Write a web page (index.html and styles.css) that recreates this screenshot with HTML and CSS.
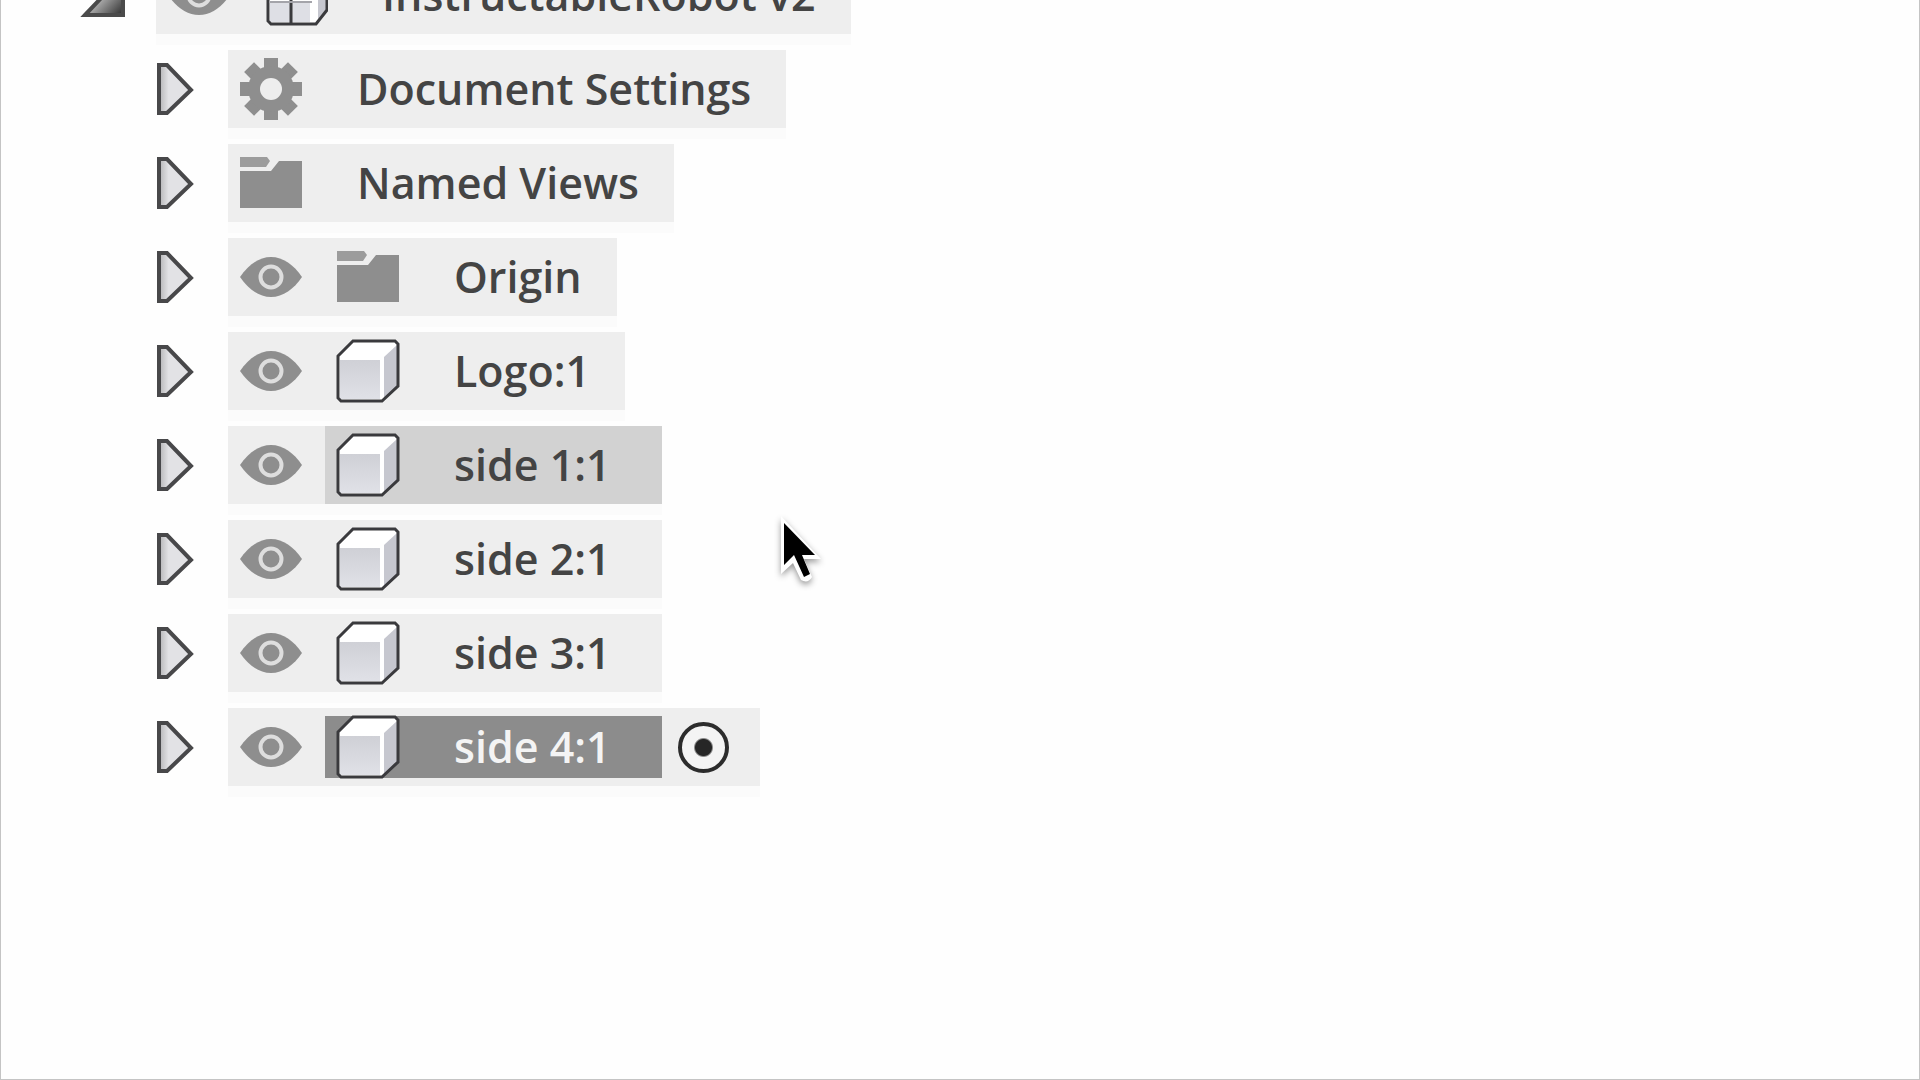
FILE: index.html
```html
<!DOCTYPE html>
<html lang="en">
<head>
  <meta charset="UTF-8">
  <meta name="viewport" content="width=device-width, initial-scale=1.0">
  <title>InstructableRobot v2 - Browser</title>
  <link rel="stylesheet" href="styles.css">
</head>
<body>

  <!-- Shared icons -->
  <svg class="icon-defs" aria-hidden="true">
    <defs>
      <linearGradient id="faceFill" x1="0" y1="0" x2="0" y2="1">
        <stop offset="0" stop-color="#cfd0d6"/>
        <stop offset="1" stop-color="#e0e1e7"/>
      </linearGradient>
      <linearGradient id="openFill" x1="0" y1="0" x2="1" y2="1">
        <stop offset="0.4" stop-color="#c8c8c8"/>
        <stop offset="1" stop-color="#2c2c2c"/>
      </linearGradient>
      <linearGradient id="arrowFill" x1="0" y1="0" x2="1" y2="0">
        <stop offset="0" stop-color="#b4b4b6"/>
        <stop offset="0.3" stop-color="#e2e2e5"/>
      </linearGradient>
    </defs>
    <symbol id="arrow" viewBox="0 0 38 54">
      <path d="M3 3h8L35 28 11 51H3z" fill="url(#arrowFill)" stroke="#48484a" stroke-width="4"/>
    </symbol>
    <symbol id="arrow-open" viewBox="0 0 48 48">
      <path d="M5 44L43 4v40z" fill="url(#openFill)" stroke="#4a4a4a" stroke-width="4"/>
    </symbol>
    <symbol id="eye" viewBox="0 0 64 64">
      <path d="M1 32C9 20 20 12 32 12S55 20 63 32C55 44 44 52 32 52S9 44 1 32z" fill="#8e8e8e"/>
      <circle cx="32" cy="32" r="10.500" fill="none" stroke="#dedede" stroke-width="4"/>
    </symbol>
    <symbol id="gear" viewBox="0 0 64 64">
      <g fill="#8e8e8e">
        <rect x="25" y="1" width="14" height="62"/>
        <rect x="25" y="1" width="14" height="62" transform="rotate(45 32 32)"/>
        <rect x="25" y="1" width="14" height="62" transform="rotate(90 32 32)"/>
        <rect x="25" y="1" width="14" height="62" transform="rotate(135 32 32)"/>
        <circle cx="32" cy="32" r="23"/>
      </g>
      <circle cx="32" cy="32" r="11" fill="#eeeeee"/>
    </symbol>
    <symbol id="folder" viewBox="0 0 64 64">
      <path d="M1 6h27l3 4-4 6H1z" fill="#9c9c9c"/>
      <path d="M1 20h31l8-10h23v47H1z" fill="#8e8e8e"/>
    </symbol>
    <symbol id="cube" viewBox="0 0 64 64">
      <path d="M2 17L17 2h42l3 3v42L46 62H5l-3-3z" fill="#ffffff"/>
      <path d="M4 21h40v39H4z" fill="url(#faceFill)"/>
      <path d="M48 18L61 6v41L48 59z" fill="#c6c7cf"/>
      <path d="M2 17L17 2h42l3 3v42L46 62H5l-3-3z" fill="none" stroke="#3a3a3d" stroke-width="3"/>
    </symbol>
    <symbol id="assembly" viewBox="0 0 64 64">
      <path d="M4 17L19 2h42l3 3v42L52 61H7l-3-3z" fill="#ffffff"/>
      <path d="M6 40h40v19H6z" fill="#dedfe5"/>
      <path d="M54 18l8-12v41l-8 9z" fill="#c6c7cf"/>
      <path d="M4 17L19 2h41l3 3v42L52 61H7l-3-3zM27 17v44" fill="none" stroke="#3a3a3d" stroke-width="3"/>
      <path d="M5 39h43" stroke="#a4a4aa" stroke-width="2"/>
    </symbol>
  </svg>

  <!-- Browser tree -->
  <main class="browser">
    <div class="row">
      <button class="toggle root" aria-label="Collapse InstructableRobot v2"><svg class="open"><use href="#arrow-open"/></svg></button>
      <div class="bar">
        <button class="eye" aria-label="Toggle visibility"><svg class="icon"><use href="#eye"/></svg></button>
        <div class="node"><svg class="icon"><use href="#assembly"/></svg><span>InstructableRobot v2</span></div>
      </div>
    </div>

    <ul class="children">
      <li class="row">
        <button class="toggle" aria-label="Expand Document Settings"><svg class="arrow"><use href="#arrow"/></svg></button>
        <div class="bar">
          <div class="node"><svg class="icon"><use href="#gear"/></svg><span>Document Settings</span></div>
        </div>
      </li>
      <li class="row">
        <button class="toggle" aria-label="Expand Named Views"><svg class="arrow"><use href="#arrow"/></svg></button>
        <div class="bar">
          <div class="node"><svg class="icon"><use href="#folder"/></svg><span>Named Views</span></div>
        </div>
      </li>
      <li class="row">
        <button class="toggle" aria-label="Expand Origin"><svg class="arrow"><use href="#arrow"/></svg></button>
        <div class="bar">
          <button class="eye" aria-label="Toggle visibility"><svg class="icon"><use href="#eye"/></svg></button>
          <div class="node"><svg class="icon"><use href="#folder"/></svg><span>Origin</span></div>
        </div>
      </li>
      <li class="row">
        <button class="toggle" aria-label="Expand Logo:1"><svg class="arrow"><use href="#arrow"/></svg></button>
        <div class="bar">
          <button class="eye" aria-label="Toggle visibility"><svg class="icon"><use href="#eye"/></svg></button>
          <div class="node"><svg class="icon"><use href="#cube"/></svg><span>Logo:1</span></div>
        </div>
      </li>
      <li class="row">
        <button class="toggle" aria-label="Expand side 1:1"><svg class="arrow"><use href="#arrow"/></svg></button>
        <div class="bar">
          <button class="eye" aria-label="Toggle visibility"><svg class="icon"><use href="#eye"/></svg></button>
          <div class="node side hovered"><svg class="icon"><use href="#cube"/></svg><span>side 1:1</span></div>
        </div>
      </li>
      <li class="row">
        <button class="toggle" aria-label="Expand side 2:1"><svg class="arrow"><use href="#arrow"/></svg></button>
        <div class="bar">
          <button class="eye" aria-label="Toggle visibility"><svg class="icon"><use href="#eye"/></svg></button>
          <div class="node side"><svg class="icon"><use href="#cube"/></svg><span>side 2:1</span></div>
        </div>
      </li>
      <li class="row">
        <button class="toggle" aria-label="Expand side 3:1"><svg class="arrow"><use href="#arrow"/></svg></button>
        <div class="bar">
          <button class="eye" aria-label="Toggle visibility"><svg class="icon"><use href="#eye"/></svg></button>
          <div class="node side"><svg class="icon"><use href="#cube"/></svg><span>side 3:1</span></div>
        </div>
      </li>
      <li class="row">
        <button class="toggle" aria-label="Expand side 4:1"><svg class="arrow"><use href="#arrow"/></svg></button>
        <div class="bar">
          <button class="eye" aria-label="Toggle visibility"><svg class="icon"><use href="#eye"/></svg></button>
          <label class="node side selected" for="active4"><svg class="icon"><use href="#cube"/></svg><span>side 4:1</span></label>
          <input class="activate" type="radio" name="active" id="active4" checked>
        </div>
      </li>
    </ul>
  </main>

  <!-- Mouse pointer -->
  <svg class="pointer" viewBox="0 0 60 80" aria-hidden="true">
    <path d="M6 4v58l12-11 8 17q7 4 11-3l-8-18h17z" fill="#ffffff"/>
    <path d="M9 11v42l10-10 10 22 6-3-8-19h13z" fill="#000000"/>
  </svg>

</body>
</html>
```
FILE: styles.css
```css
* {
  margin: 0;
  padding: 0;
  box-sizing: border-box;
}

body {
  min-height: 100vh;
  background: #fefefe;
  color: #444444;
  font-family: 'Open Sans', 'Noto Sans', sans-serif;
  font-size: 43px;
  font-weight: 600;
  line-height: 60px;
  border: 1px solid #c4c4c4;
  border-top: none;
  overflow: hidden;
}

button {
  background: none;
  border: none;
  cursor: pointer;
}

svg {
  display: block;
}

.icon-defs {
  position: absolute;
  width: 0;
  height: 0;
}

/* The tree is scrolled, so the root row is cut off at the top */
.browser {
  margin-top: -44px;
  padding-left: 83px;
}

.children {
  list-style: none;
  padding-left: 72px;
}

.row {
  display: flex;
  align-items: center;
  margin-bottom: 16px;
}

.toggle {
  width: 72px;
  flex: none;
}

.arrow {
  width: 38px;
  height: 54px;
}

.open {
  width: 48px;
  height: 48px;
}

.root {
  display: flex;
  margin-left: -4px;
  width: 76px;
}

.bar {
  display: flex;
  align-items: center;
  height: 78px;
  background: #eeeeee;
  box-shadow: 0 11px 0 #fbfbfb;
}

.eye {
  width: 97px;
  padding-left: 11px;
}

.icon {
  width: 64px;
  height: 64px;
  flex: none;
}

.node {
  display: flex;
  align-items: center;
  gap: 54px;
  height: 100%;
  padding: 0 35px 0 11px;
  white-space: nowrap;
}

.side {
  min-width: 337px;
}

.hovered {
  background: #d2d2d2;
}

.selected {
  height: 62px;
  background: #8c8c8c;
  color: #f4f4f4;
}

/* Active component marker */
.activate {
  appearance: none;
  width: 51px;
  height: 51px;
  margin: 0 31px 0 16px;
  border: 4px solid #2c2c2c;
  border-radius: 50%;
  background: radial-gradient(circle, #262626 8px, #f4f4f4 10px);
}

.pointer {
  position: absolute;
  left: 775px;
  top: 512px;
  width: 60px;
  height: 80px;
  filter: drop-shadow(0 3px 3px rgba(0, 0, 0, 0.4));
}
```
